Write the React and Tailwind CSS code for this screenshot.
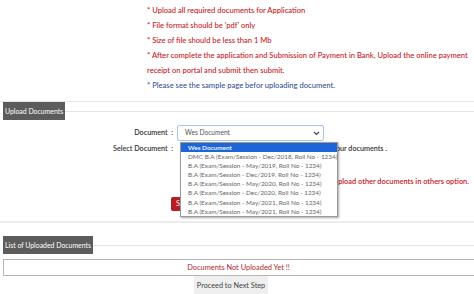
import React from "react";

const items = [
  "DMC B.A (Exam/Session - Dec/2018, Roll No - 1234)",
  "B.A (Exam/Session - May/2019, Roll No - 1234)",
  "B.A (Exam/Session - Dec/2019, Roll No - 1234)",
  "B.A (Exam/Session - May/2020, Roll No - 1234)",
  "B.A (Exam/Session - Dec/2020, Roll No - 1234)",
  "B.A (Exam/Session - May/2021, Roll No - 1234)",
  "B.A (Exam/Session - May/2021, Roll No - 1234)",
];

function Legend({ children }) {
  return (
    <div className="flex items-center h-[18px]">
      <div className="h-[18px] bg-[#5c5c5c] text-white text-[6.9px] leading-[18px] px-[2px] whitespace-nowrap">{children}</div>
      <div className="flex-1 border-t border-[#e3e3e3]"></div>
    </div>
  );
}

export default function App() {
  return (
    <div className="relative w-[474px] h-[294px] overflow-hidden bg-white" style={{ fontFamily: "Lato, 'Open Sans', sans-serif" }}>
      <div className="pt-[3px] pl-[147px] text-[7.6px] leading-[15px] text-[#c8161d] font-medium whitespace-nowrap">
        <div>* Upload all required documents for Application</div>
        <div>* File format should be 'pdf' only</div>
        <div>* Size of file should be less than 1 Mb</div>
        <div>* After complete the application and Submission of Payment in Bank, Upload the online payment</div>
        <div>receipt on portal and submit then submit.</div>
        <div className="text-[#3b4f9a]">* Please see the sample page befor uploading document.</div>
      </div>
      <div className="mt-[8px] border-t border-[#e6e6e6]"></div>
      <div className="pl-[3px]">
        <Legend>Upload Documents</Legend>
      </div>
      <div className="mt-[5px] flex items-center h-[16px]">
        <div className="w-[177px] text-right pr-[4px] text-[7.2px] font-semibold text-[#333]">Document&nbsp;&nbsp;:</div>
        <div className="w-[147px] h-[16px] border border-[#a9c3e6] rounded-[2px] flex items-center justify-between pl-[7px] pr-[3px] text-[6.6px] text-[#555]">
          <span>Wes Document</span>
          <svg width="7" height="5" viewBox="0 0 7 5"><path d="M1 1l2.5 2.5L6 1" fill="none" stroke="#444" strokeWidth="1.2" /></svg>
        </div>
      </div>
      <div className="mt-[1px] flex items-center h-[15px]">
        <div className="w-[177px] text-right pr-[4px] text-[7.2px] font-semibold text-[#333]">Select Document&nbsp;&nbsp;:</div>
        <div className="w-[210px] text-right text-[7.2px] font-semibold text-[#333] whitespace-nowrap">Upload your documents .</div>
      </div>
      <div className="mt-[17px] flex items-center justify-end h-[15px] pr-[5px]">
        <div className="text-[7.4px] font-semibold text-[#c8161d] whitespace-nowrap">Note: You can upload other documents in others option.</div>
      </div>
      <div className="mt-[8px] pl-[171px]">
        <div className="w-[40px] h-[14px] bg-[#b71c24] rounded-[2px] text-white text-[7.5px] leading-[14px] pl-[5px]">Submit</div>
      </div>
      <div className="mt-[10px] border-t-2 border-[#ececec]"></div>
      <div className="mt-[13px] pl-[3px]">
        <Legend>List of Uploaded Documents</Legend>
      </div>
      <div className="mt-[5px] ml-[3px] -mr-[2px] h-[17px] border border-[#b5b5b5] flex items-center justify-center pr-[2px] text-[7.4px] text-[#b0262c]">
        Documents Not Uploaded Yet !!
      </div>
      <div className="flex justify-center pr-[12px]">
        <div className="w-[74px] h-[20px] bg-[#efefef] flex items-center justify-center text-[7.3px] text-[#444] whitespace-nowrap">Proceed to Next Step</div>
      </div>

      <div className="absolute left-[180px] top-[142px] w-[158px] bg-white border border-[#9a9a9a] shadow-[1px_1px_2px_rgba(0,0,0,0.35)] text-[6.4px] leading-[9.1px] text-[#666]">
        <div className="bg-[#1e66d8] text-white pl-[7px] font-semibold">Wes Document</div>
        {items.map((t, i) => (
          <div key={i} className="pl-[7px] whitespace-nowrap">{t}</div>
        ))}
      </div>
    </div>
  );
}
